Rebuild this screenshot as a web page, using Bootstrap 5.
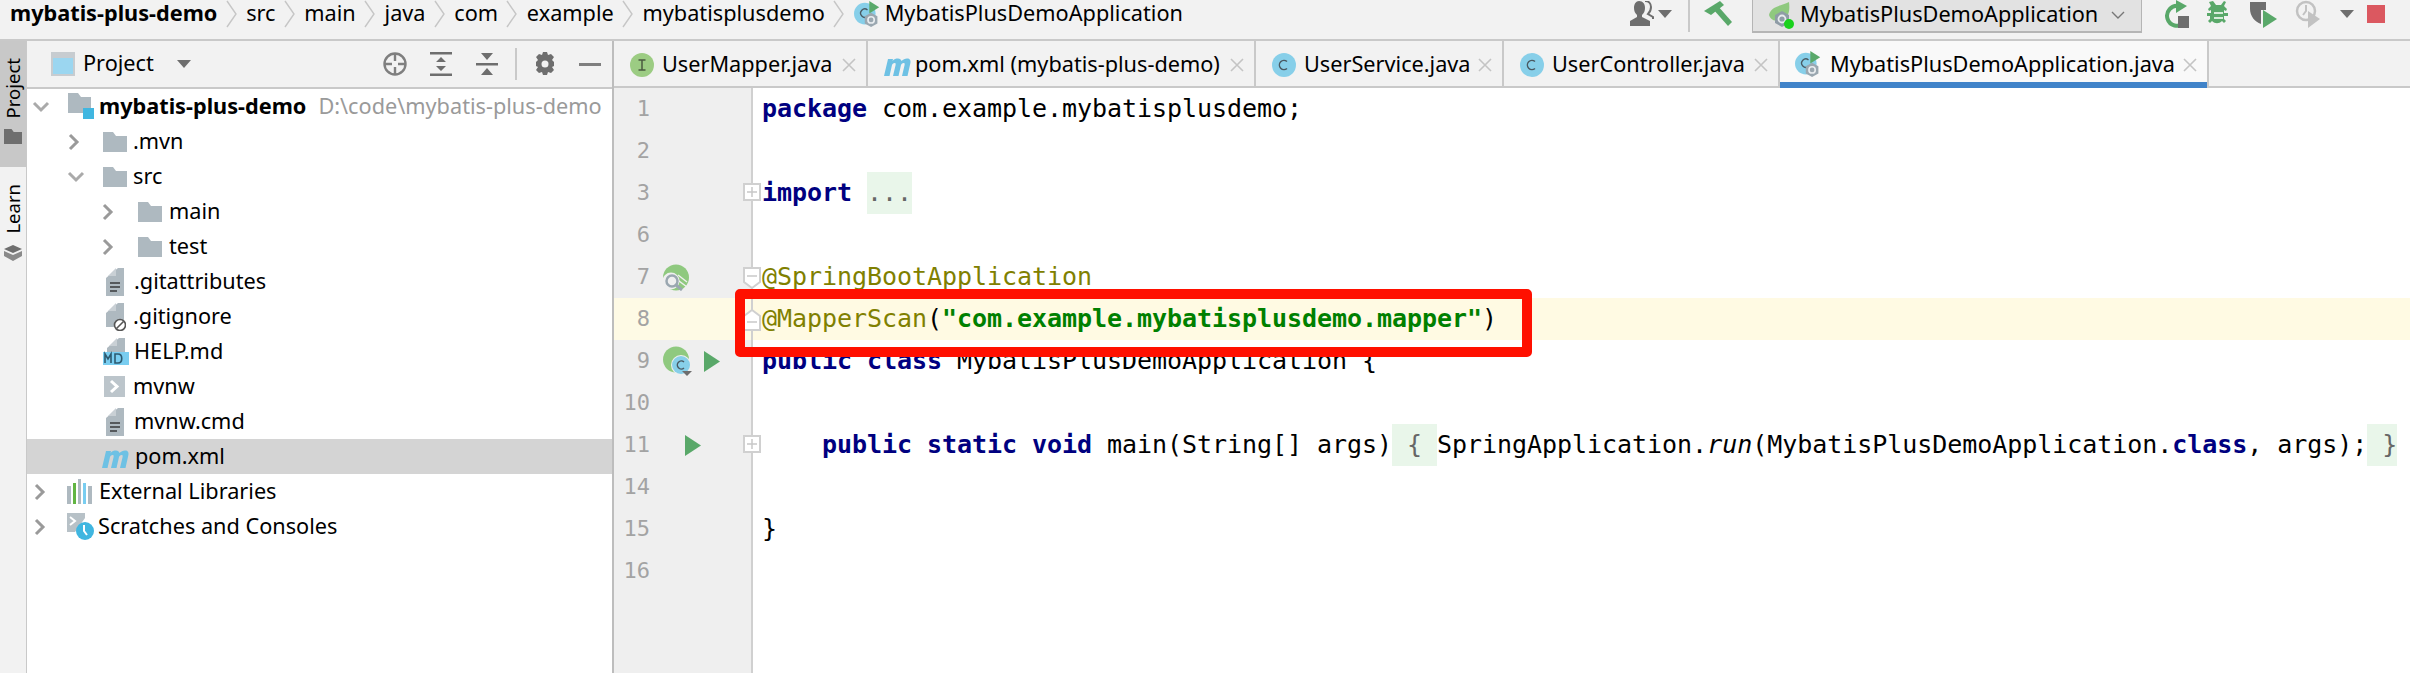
<!doctype html>
<html lang="en"><head><meta charset="utf-8"><title>mybatis-plus-demo</title>
<link rel="stylesheet" href="https://cdn.jsdelivr.net/npm/bootstrap@5.3.0/dist/css/bootstrap.min.css">
<style>
html,body{height:673px;overflow:hidden}
body{background:#f2f2f2;color:#000;font-family:"Noto Sans","Liberation Sans",sans-serif;font-size:21.7px;line-height:1}
.ide{width:2410px;height:673px}
.crumbbar{height:41px;border-bottom:2px solid #c9c9c9;padding:0 25px 11px 10px;flex:none}
.crumbbar .cr-ch{width:14px;height:28px;margin:0 7.4px;flex:none}
.cr-name{white-space:nowrap;margin-top:-2px}
.tools{height:28px;align-self:flex-start}
.tb-sep{width:2px;height:32px;background:#c9c9c9}
.tools .tb-sep{align-self:flex-start}
.runbox{width:390px;height:33px;align-self:flex-start;flex:none;background:#e2e2e2;border:2px solid #b5b5b5;border-top:0;border-left-width:1px;border-right-width:1px;padding-left:14px}
.runbox .cr-name{margin-top:-4px}
.strip{width:27px;border-right:1px solid #c9c9c9;flex:none}
.strip-tab{height:128px;padding-top:19px;gap:11px}
.strip-tab.on{background:#c8c8c8;margin-top:-2px;height:128px}
.strip-tab2{padding-top:17px;gap:11px}
.vtext{writing-mode:vertical-rl;transform:rotate(180deg);font-size:18.5px;line-height:26px;width:26px}
.proj{width:587px;background:#fff;border-right:2px solid #bdbdbd;flex:none}
.proj-head{height:48px;background:#f2f2f2;border-bottom:2px solid #c9c9c9;padding-left:24px;position:relative}
.ph-ico{flex:none}
.ph-t{margin-top:-2px}
.rowt{height:35px;white-space:nowrap}
.rowt>span,.rowt>b{margin-top:-2px}
.rowt.sel{background:#d4d4d4}
.rowt .arr{width:12px;height:18px;flex:none}
.i0{padding-left:5px}.i1{padding-left:41px}.i2{padding-left:75px}
.rootch{margin-right:18px}
.i1 .arr{margin-right:23px}.i2 .arr{margin-right:24px}
.fld{margin-right:6px}
.i2 .fld{margin-right:7px}
.path{color:#9a9a9a;margin-left:12px}
.edit{min-width:0}
.tabs{height:47px;border-bottom:2px solid #c9c9c9;flex:none;background:#f2f2f2}
.ftab{height:47px;border-right:2px solid #c9c9c9;padding-left:16px;flex:none;white-space:nowrap;margin-bottom:-2px}
.ftab>span{margin-top:-2px}
.ftab.on{background:#f9f9f9;box-shadow:inset 0 -6px 0 #4083c9;padding-left:15px}
.ftab .xx{margin-left:auto;margin-right:10px;flex:none}
.w1{width:254px}.w2{width:388px}.w3{width:248px}.w4{width:276px}.w5{width:429px}
.codebox{background:#fff;position:relative}
.ln{height:42px;font-family:"DejaVu Sans Mono","Liberation Mono",monospace;font-size:25px;letter-spacing:-.05px;white-space:pre;line-height:42px;flex:none}
.gutrest{height:auto;flex:1 1 auto}
.gut{width:139px;background:#efefef;border-right:2px solid #d0d0d0;position:relative;flex:none;display:flex;align-items:center;letter-spacing:0}
.gut .no{width:36px;text-align:right;font-size:22px;color:#a3a3a3;flex:none}
.code{padding-left:9px}
.ln.cur{background:#fffae3}
.ln.cur .gut{background:#fefae5}
.fold{position:absolute;right:-10px;top:50%;margin-top:-10px}
.k{color:#000080;font-weight:700}
.a{color:#808000}
.s{color:#008000;font-weight:700}
.fb{background:#e9f6ea;color:#666;display:inline-block;height:42px;vertical-align:top}
.redbox{position:absolute;left:121px;top:201px;width:797px;height:68px;border:10px solid #ff1000;border-radius:5px}
.tsp1{margin:0 14px 0 16px}
.hammer{margin-right:20px}
.usr-c{margin-left:4px}
.tb-a{margin-left:22px}.tb-b{margin-left:17px}.tb-c{margin-left:20px}.tb-d{margin-left:17px}.tb-e{margin-left:20px}.tb-f{margin-left:13px}
.ph-dd{margin-left:23px}.ph-a{margin-left:192px}.ph-b{margin-left:23px}.ph-c{margin-left:24px}.ph-s{margin-left:17px;margin-right:17px}.ph-e{margin-left:23px}
.dn{margin-right:18px;margin-left:-1px}
.file{padding-left:79px}.ft{margin-left:10px}.rowt>.ft2{margin-left:7px}.rowt>.ft3{margin-left:5px}.mdi{margin-left:-3px}.shi{margin-left:-2px}.rowt>.ft4{margin-left:8px}.mdi2{margin-left:-4px}.rowt>.ft5{margin-left:6px}
.top1{padding-left:7px}.libs{margin-left:21px;margin-right:7px}.libs2{margin-left:21px;margin-right:4px}
.sprg1{margin-left:13px}.play1{margin-left:11px}.play2{margin-left:35px}
</style></head>
<body>
<svg width="0" height="0" class="position-absolute">
<symbol id="folder" viewBox="0 0 24 20"><path d="M0 0h10l3 4h11v16H0z" fill="#aeb9c0"/></symbol>
<symbol id="doc" viewBox="0 0 18 28"><path d="M12 0h6v28H0V10z" fill="#aeb9c0"/><path d="M10 0v8H2z" fill="#c9d0d5"/><path d="M4 14h10v2H4zM4 18h10v2H4zM4 22h7v2H4z" fill="#55595c"/></symbol>
<symbol id="chev" viewBox="0 0 12 18"><path d="M2 2l7 7-7 7" fill="none" stroke="#9a9a9a" stroke-width="3"/></symbol>
<symbol id="chevd" viewBox="0 0 18 12"><path d="M2 2l7 7 7-7" fill="none" stroke="#aaa" stroke-width="3"/></symbol>
<symbol id="crumb" viewBox="0 0 14 28"><path d="M2 1l9 13-9 13" fill="none" stroke="#c6c6c6" stroke-width="1.4"/></symbol>
<symbol id="xmark" viewBox="0 0 14 14"><path d="M1 1l12 12M13 1L1 13" stroke="#c4c4c4" stroke-width="1.6"/></symbol>
<symbol id="cico" viewBox="0 0 24 24"><circle cx="12" cy="12" r="12" fill="#87cfe9"/><path d="M15 8.500a4.600 4.600 0 1 0 0 7" fill="none" stroke="#4a5a63" stroke-width="1.500"/></symbol>
<symbol id="mico" viewBox="0 0 27 23"><path d="M0 23L4 6h5l-.5 2C10 6 12 5.500 14 5.500c2 0 3 1 3.500 2.500C19 6.500 21 5.500 23 5.500c3 0 4 2 3.300 5L23.500 23h-5.500l2.600-11c.3-1.500-.1-2-1-2-1 0-2.200.8-2.600 2L14.500 23h-5.500l2.600-11c.3-1.500-.1-2-1-2-1 0-2.200.8-2.600 2L5.500 23z" fill="#6ec1e4"/></symbol>
<symbol id="appico" viewBox="0 0 30 32"><circle cx="12" cy="15" r="12" fill="#87cfe9"/><path d="M15 11a4.600 4.600 0 1 0 0 7" fill="none" stroke="#4a5a63" stroke-width="1.500"/><path d="M17 1l11 7-11 7z" fill="#59a869"/><path d="M19 14l7 4v8l-7 4-7-4v-8z" fill="#9aa7b0"/><circle cx="19" cy="22" r="3.500" fill="none" stroke="#e8ecef" stroke-width="1.800"/></symbol>
<symbol id="spring" viewBox="0 0 26 27"><circle cx="13" cy="13.500" r="13" fill="#8fc97f"/><path d="M12 14l12 9M15 11l9 7" fill="none" stroke="#efefef" stroke-width="1.500"/></symbol>
<symbol id="play" viewBox="0 0 16 21"><path d="M0 0l16 10.500L0 21z" fill="#59a869"/></symbol>
<symbol id="caret" viewBox="0 0 14 8"><path d="M0 0h14L7 8z" fill="#6e6e6e"/></symbol>
</svg>
<div class="ide d-flex flex-column">
<header class="crumbbar d-flex align-items-center">
 <b class="cr-name bname">mybatis-plus-demo</b>
 <svg class="cr-ch"><use href="#crumb"/></svg><span class="cr-name">src</span>
 <svg class="cr-ch"><use href="#crumb"/></svg><span class="cr-name">main</span>
 <svg class="cr-ch"><use href="#crumb"/></svg><span class="cr-name">java</span>
 <svg class="cr-ch"><use href="#crumb"/></svg><span class="cr-name">com</span>
 <svg class="cr-ch"><use href="#crumb"/></svg><span class="cr-name">example</span>
 <svg class="cr-ch"><use href="#crumb"/></svg><span class="cr-name">mybatisplusdemo</span>
 <svg class="cr-ch"><use href="#crumb"/></svg>
 <svg width="27" height="29" class="me-1"><use href="#appico"/></svg><span class="cr-name">MybatisPlusDemoApplication</span>
 <div class="tools ms-auto d-flex align-items-center">
  <svg width="24" height="26" viewBox="0 0 24 26"><path d="M9 0c4 0 6 3 6 7 0 3-1 5-3 7v2l8 4v5H0v-5l7-4v-2C5 12 4 10 4 7c0-4 2-7 5-7z" fill="#6e6e6e"/><path d="M15 0c4 0 6 3 6 6 0 3-1 5-3 7l5 3v2" fill="none" stroke="#6e6e6e" stroke-width="2"/></svg>
  <svg width="14" height="8" class="usr-c"><use href="#caret"/></svg>
  <span class="tb-sep tsp1"></span>
  <svg width="28" height="26" viewBox="0 0 28 26" class="hammer"><path d="M0 10L16 0l4 4L7 14z" fill="#59a869"/><path d="M9 8l4-4 15 17-4 4z" fill="#59a869"/></svg>
  <div class="runbox d-flex align-items-center">
   <svg width="29" height="28" viewBox="0 0 29 28"><path d="M2 13C4 4 14 4 22 0c1 8 0 15-6 18-6 2-12 1-14-5z" fill="#8fc97f"/><path d="M15 9l7 4v8l-7 4-7-4v-8z" fill="#8f9ca6"/><circle cx="15" cy="17" r="3.500" fill="none" stroke="#e8ecef" stroke-width="1.800"/><circle cx="22" cy="22" r="5" fill="#19d11c"/></svg>
   <span class="ms-1 cr-name">MybatisPlusDemoApplication</span>
   <svg width="14" height="9" viewBox="0 0 14 9" class="ms-auto me-3"><path d="M1 1l6 6 6-6" fill="none" stroke="#777" stroke-width="1.400"/></svg>
  </div>
  <svg width="26" height="28" viewBox="0 0 26 28" class="tb-a"><path d="M20 23a10 10 0 1 1-5-17" fill="none" stroke="#59a869" stroke-width="4"/><path d="M12 0l11 6-11 7z" fill="#59a869"/><path d="M14 16h11v12H14z" fill="#6e6e6e"/></svg>
  <svg width="23" height="26" viewBox="0 0 23 26" class="tb-b"><path d="M6 0l3 4h5l3-4 2 1-2 4 3 3-1 2-2-1v3h4v3h-4v3l2 2-2 2-2-2c-3 3-7 3-10 0l-2 2-2-2 2-2v-3H0v-3h4V9L2 10 1 8l3-3-2-4z" fill="#59a869"/><path d="M7 11h9v2H7zM7 16h9v2H7z" fill="#d7ecd9"/></svg>
  <svg width="28" height="28" viewBox="0 0 28 28" class="tb-c"><path d="M0 2h16v8h-5v14C5 22 0 16 0 9z" fill="#6e6e6e"/><path d="M13 10l14 9-14 9z" fill="#59a869"/></svg>
  <svg width="25" height="28" viewBox="0 0 25 28" class="tb-d"><circle cx="11" cy="11" r="9" fill="none" stroke="#c2c2c2" stroke-width="2.500"/><path d="M11 5v6l-3 4" fill="none" stroke="#c2c2c2" stroke-width="2"/><path d="M13 11l12 8-12 9z" fill="#c2c2c2"/></svg>
  <svg width="14" height="8" class="tb-e"><use href="#caret"/></svg>
  <svg width="18" height="18" class="tb-f"><rect width="18" height="18" fill="#db5860"/></svg>
 </div>
</header>
<div class="d-flex flex-grow-1 overflow-hidden">
 <aside class="strip">
  <div class="strip-tab on d-flex flex-column align-items-center">
   <span class="vtext">Project</span>
   <svg width="18" height="15" viewBox="0 0 24 20"><path d="M0 0h10l3 4h11v16H0z" fill="#6e6e6e"/></svg>
  </div>
  <div class="strip-tab2 d-flex flex-column align-items-center">
   <span class="vtext">Learn</span>
   <svg width="18" height="16" viewBox="0 0 18 16"><path d="M9 0l9 4-9 4-9-4z" fill="#6e6e6e"/><path d="M0 6l9 4 9-4v5l-9 5-9-5z" fill="#8a8a8a"/></svg>
  </div>
 </aside>
 <section class="proj">
  <div class="proj-head d-flex align-items-center">
   <svg width="24" height="24" viewBox="0 0 24 24" class="ph-ico"><rect width="24" height="24" fill="#c7ccd0"/><rect x="2" y="6" width="20" height="16" fill="#9bd6f0"/></svg>
   <span class="ms-2 ph-t">Project</span>
   <svg width="14" height="8" class="ph-dd"><use href="#caret"/></svg>
   <svg width="24" height="26" viewBox="0 0 24 26" class="ph-a"><circle cx="12" cy="13" r="10.500" fill="none" stroke="#7f7f7f" stroke-width="2.400"/><path d="M12 3v7M12 16v7M2 13h7M15 13h7" stroke="#7f7f7f" stroke-width="2.400"/></svg>
   <svg width="22" height="26" viewBox="0 0 22 26" class="ph-b"><path d="M0 1h22v2.500H0zM0 22.500h22V25H0z" fill="#6e6e6e"/><path d="M11 6l5 5H6zM11 20l5-5H6z" fill="#6e6e6e"/></svg>
   <svg width="22" height="26" viewBox="0 0 22 26" class="ph-c"><path d="M0 12h22v2.500H0z" fill="#6e6e6e"/><path d="M5 2h12l-6 7zM5 24h12l-6-7z" fill="#6e6e6e"/></svg>
   <span class="tb-sep ph-s"></span>
   <svg width="22" height="24" viewBox="0 0 22 24" class="ph-d"><path d="M9 0h4l1 3 3-1 3 3-2 3 2 2v4l-2 1 2 3-3 3-3-1-1 3H9l-1-3-3 1-3-3 2-3-2-1v-4l2-2-2-3 3-3 3 1z" fill="#6e6e6e"/><circle cx="11" cy="12" r="3.500" fill="#f2f2f2"/></svg>
   <svg width="22" height="3" class="ph-e"><rect width="22" height="3" fill="#7f7f7f"/></svg>
  </div>
  <div class="rowt i0 d-flex align-items-center"><svg width="18" height="12" class="rootch"><use href="#chevd"/></svg><svg width="27" height="27" viewBox="0 0 27 27" class="me-1"><path d="M0 0h10l3 4h10v16H0z" fill="#aeb9c0"/><rect x="15" y="15" width="11" height="11" fill="#40b6e0"/></svg><b class="bname">mybatis-plus-demo</b><span class="path">D:\code\mybatis-plus-demo</span></div>
  <div class="rowt i1 d-flex align-items-center"><svg class="arr"><use href="#chev"/></svg><svg width="24" height="20" class="fld"><use href="#folder"/></svg><span>.mvn</span></div>
  <div class="rowt i1 d-flex align-items-center"><svg width="18" height="12" class="dn"><use href="#chevd"/></svg><svg width="24" height="20" class="fld"><use href="#folder"/></svg><span>src</span></div>
  <div class="rowt i2 d-flex align-items-center"><svg class="arr"><use href="#chev"/></svg><svg width="24" height="20" class="fld"><use href="#folder"/></svg><span>main</span></div>
  <div class="rowt i2 d-flex align-items-center"><svg class="arr"><use href="#chev"/></svg><svg width="24" height="20" class="fld"><use href="#folder"/></svg><span>test</span></div>
  <div class="rowt file d-flex align-items-center"><svg width="18" height="28"><use href="#doc"/></svg><span class="ft">.gitattributes</span></div>
  <div class="rowt file d-flex align-items-center"><svg width="20" height="28" viewBox="0 0 20 28"><path d="M12 0h6v24H0V10z" fill="#aeb9c0"/><path d="M10 0v8H2z" fill="#c9d0d5"/><circle cx="14" cy="22" r="5.500" fill="#fff" stroke="#555" stroke-width="1.600"/><path d="M10.500 25.500l7-7" stroke="#555" stroke-width="1.600"/></svg><span class="ft ft2">.gitignore</span></div>
  <div class="rowt file d-flex align-items-center"><svg width="26" height="27" viewBox="0 0 26 27" class="mdi"><path d="M16 0h6v14H4v-4z" fill="#aeb9c0"/><path d="M14 0v8H6z" fill="#c9d0d5"/><rect y="14" width="26" height="13" fill="#79cdf0"/><path d="M2 25v-9l3 5 3-5v9M12 16v9h3c5 0 5-9 0-9z" fill="none" stroke="#2d5a70" stroke-width="1.600"/></svg><span class="ft ft3">HELP.md</span></div>
  <div class="rowt file d-flex align-items-center"><svg width="21" height="21" viewBox="0 0 21 21" class="shi"><rect width="21" height="21" fill="#bcc5cb"/><path d="M7 5l6 5.500L7 16" fill="none" stroke="#fff" stroke-width="3"/></svg><span class="ft ft4">mvnw</span></div>
  <div class="rowt file d-flex align-items-center"><svg width="18" height="28"><use href="#doc"/></svg><span class="ft">mvnw.cmd</span></div>
  <div class="rowt file sel d-flex align-items-center"><svg width="27" height="23" class="mdi2"><use href="#mico"/></svg><span class="ft ft5">pom.xml</span></div>
  <div class="rowt d-flex align-items-center top1"><svg class="arr"><use href="#chev"/></svg><svg width="25" height="25" viewBox="0 0 25 25" class="libs"><path d="M0 7h4v18H0z" fill="#aeb9c0"/><path d="M6 4h3v21H6z" fill="#62b543"/><path d="M11 0h3v25h-3z" fill="#aeb9c0"/><path d="M16 4h3v21h-3z" fill="#79cdf0"/><path d="M21 7h4v18h-4z" fill="#aeb9c0"/></svg><span>External Libraries</span></div>
  <div class="rowt d-flex align-items-center top1"><svg class="arr"><use href="#chev"/></svg><svg width="27" height="27" viewBox="0 0 27 27" class="libs2"><path d="M0 0h18v5L8 19H0z" fill="#b7c1c7"/><path d="M3 4l5 4-5 4" fill="none" stroke="#fff" stroke-width="2"/><circle cx="18" cy="18" r="9" fill="#40b6e0"/><path d="M17 12v6l3 4" fill="none" stroke="#fff" stroke-width="2"/></svg><span>Scratches and Consoles</span></div>
 </section>
 <section class="edit flex-grow-1 d-flex flex-column">
  <div class="tabs d-flex">
   <div class="ftab w1 d-flex align-items-center"><svg width="24" height="24" viewBox="0 0 24 24" class="me-2"><circle cx="12" cy="12" r="12" fill="#9ccc83"/><path d="M8.500 7h7M8.500 17h7M12 7v10" stroke="#4a5a40" stroke-width="1.500"/></svg><span>UserMapper.java</span><svg width="14" height="14" class="xx"><use href="#xmark"/></svg></div>
   <div class="ftab w2 d-flex align-items-center"><svg width="27" height="23" class="me-1"><use href="#mico"/></svg><span>pom.xml (mybatis-plus-demo)</span><svg width="14" height="14" class="xx"><use href="#xmark"/></svg></div>
   <div class="ftab w3 d-flex align-items-center"><svg width="24" height="24" class="me-2"><use href="#cico"/></svg><span>UserService.java</span><svg width="14" height="14" class="xx"><use href="#xmark"/></svg></div>
   <div class="ftab w4 d-flex align-items-center"><svg width="24" height="24" class="me-2"><use href="#cico"/></svg><span>UserController.java</span><svg width="14" height="14" class="xx"><use href="#xmark"/></svg></div>
   <div class="ftab w5 on d-flex align-items-center"><svg width="27" height="29" class="me-2"><use href="#appico"/></svg><span>MybatisPlusDemoApplication.java</span><svg width="14" height="14" class="xx"><use href="#xmark"/></svg></div>
  </div>
  <div class="codebox flex-grow-1 d-flex flex-column">
   <div class="ln d-flex"><div class="gut"><span class="no">1</span></div><div class="code"><span class="k">package</span> com.example.mybatisplusdemo;</div></div>
   <div class="ln d-flex"><div class="gut"><span class="no">2</span></div><div class="code"></div></div>
   <div class="ln d-flex"><div class="gut"><span class="no">3</span><svg class="fold" width="18" height="18" viewBox="0 0 18 18"><rect x="1" y="1" width="16" height="16" fill="#fff" stroke="#d0d0d0" stroke-width="2"/><path d="M4 9h10M9 4v10" stroke="#c8c8c8" stroke-width="1.500"/></svg></div><div class="code"><span class="k">import</span> <span class="fb">...</span></div></div>
   <div class="ln d-flex"><div class="gut"><span class="no">6</span></div><div class="code"></div></div>
   <div class="ln d-flex"><div class="gut"><span class="no">7</span><svg width="26" height="27" class="sprg1"><use href="#spring"/><circle cx="8" cy="17" r="8.500" fill="#efefef"/><circle cx="9" cy="17" r="5.500" fill="none" stroke="#9aa7b0" stroke-width="2.500"/><path d="M13 21l6 5" stroke="#9aa7b0" stroke-width="3"/></svg><svg class="fold" width="18" height="22" viewBox="0 0 18 22"><path d="M1 1h16v14l-8 6-8-6z" fill="#fff" stroke="#d0d0d0" stroke-width="2"/><path d="M4 9h10" stroke="#c8c8c8" stroke-width="1.500"/></svg></div><div class="code"><span class="a">@SpringBootApplication</span></div></div>
   <div class="ln cur d-flex"><div class="gut"><span class="no">8</span><svg class="fold" width="18" height="22" viewBox="0 0 18 22"><path d="M1 21h16V7L9 1 1 7z" fill="#fff" stroke="#d0d0d0" stroke-width="2"/><path d="M4 13h10" stroke="#c8c8c8" stroke-width="1.500"/></svg></div><div class="code"><span class="a">@MapperScan</span>(<span class="s">"com.example.mybatisplusdemo.mapper"</span>)</div></div>
   <div class="ln d-flex"><div class="gut"><span class="no">9</span><svg width="30" height="30" class="sprg1"><use href="#spring" width="26" height="27"/><circle cx="18" cy="19" r="10" fill="#efefef"/><circle cx="18" cy="19" r="9" fill="#87cfe9"/><path d="M21 16a4 4 0 1 0 0 6" fill="none" stroke="#4a5a63" stroke-width="1.500"/><path d="M19 25h10l-5 5z" fill="#6e6e6e"/></svg><svg width="16" height="21" class="play1"><use href="#play"/></svg></div><div class="code"><span class="k">public class</span> MybatisPlusDemoApplication {</div></div>
   <div class="ln d-flex"><div class="gut"><span class="no">10</span></div><div class="code"></div></div>
   <div class="ln d-flex"><div class="gut"><span class="no">11</span><svg width="16" height="21" class="play2"><use href="#play"/></svg><svg class="fold" width="18" height="18" viewBox="0 0 18 18"><rect x="1" y="1" width="16" height="16" fill="#fff" stroke="#d0d0d0" stroke-width="2"/><path d="M4 9h10M9 4v10" stroke="#c8c8c8" stroke-width="1.500"/></svg></div><div class="code">    <span class="k">public static void</span> main(String[] args)<span class="fb"> { </span>SpringApplication.<i>run</i>(MybatisPlusDemoApplication.<span class="k">class</span>, args);<span class="fb"> }</span></div></div>
   <div class="ln d-flex"><div class="gut"><span class="no">14</span></div><div class="code"></div></div>
   <div class="ln d-flex"><div class="gut"><span class="no">15</span></div><div class="code">}</div></div>
   <div class="ln d-flex"><div class="gut"><span class="no">16</span></div><div class="code"></div></div>
   <div class="ln gutrest d-flex"><div class="gut"></div></div>
   <div class="redbox"></div>
  </div>
 </section>
</div>
</div>
</body></html>
